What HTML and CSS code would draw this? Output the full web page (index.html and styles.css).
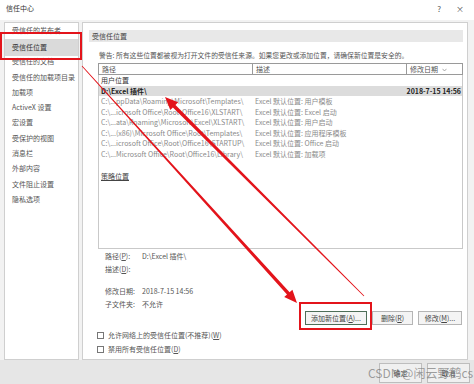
FILE: index.html
```html
<!DOCTYPE html>
<html lang="zh-CN">
<head>
<meta charset="utf-8">
<title>信任中心</title>
<link rel="stylesheet" href="styles.css">
</head>
<body>
<div class="window">
  <div class="titlebar">
    <span class="title">信任中心</span>
    <span class="tb-btns"><span class="tb-help">?</span><span class="tb-close">×</span></span>
  </div>
  <div class="main">
    <ul class="nav">
      <li>受信任的发布者</li>
      <li class="active">受信任位置</li>
      <li>受信任的文档</li>
      <li>受信任的加载项目录</li>
      <li>加载项</li>
      <li>ActiveX 设置</li>
      <li>宏设置</li>
      <li>受保护的视图</li>
      <li>消息栏</li>
      <li>外部内容</li>
      <li>文件阻止设置</li>
      <li>隐私选项</li>
    </ul>
    <section class="content">
      <div class="section-head">受信任位置</div>
      <p class="warning">警告: 所有这些位置都被视为打开文件的受信任来源。如果您更改或添加位置，请确保新位置是安全的。</p>
      <div class="list">
        <div class="list-head">
          <div class="col-path">路径</div>
          <div class="col-desc">描述</div>
          <div class="col-date">修改日期 <svg class="caret" width="5" height="4" viewBox="0 0 5 4"><path d="M0.5 0.8 L2.5 3 L4.5 0.8" fill="none" stroke="#8a8a8a" stroke-width="0.7"/></svg></div>
        </div>
        <div class="list-body">
          <div class="group">用户位置</div>
          <div class="row selected"><span class="c-path">D:\Excel 插件\</span><span class="c-desc"></span><span class="c-date">2018-7-15 14:56</span></div>
          <div class="row"><span class="c-path">C:\...ppData\Roaming\Microsoft\Templates\</span><span class="c-desc">Excel 默认位置: 用户模板</span><span class="c-date"></span></div>
          <div class="row"><span class="c-path">C:\...icrosoft Office\Root\Office16\XLSTART\</span><span class="c-desc">Excel 默认位置: Excel 启动</span><span class="c-date"></span></div>
          <div class="row"><span class="c-path">C:\...ata\Roaming\Microsoft\Excel\XLSTART\</span><span class="c-desc">Excel 默认位置: 用户启动</span><span class="c-date"></span></div>
          <div class="row"><span class="c-path">C:\...(x86)\Microsoft Office\Root\Templates\</span><span class="c-desc">Excel 默认位置: 应用程序模板</span><span class="c-date"></span></div>
          <div class="row"><span class="c-path">C:\...icrosoft Office\Root\Office16\STARTUP\</span><span class="c-desc">Excel 默认位置: Office 启动</span><span class="c-date"></span></div>
          <div class="row"><span class="c-path">C:\...Microsoft Office\Root\Office16\Library\</span><span class="c-desc">Excel 默认位置: 加载项</span><span class="c-date"></span></div>
          <div class="group policy">策略位置</div>
        </div>
      </div>
      <div class="details">
        <span class="lbl">路径(<u>P</u>):</span><span class="val">D:\Excel 插件\</span>
        <span class="lbl">描述(<u>D</u>):</span><span class="val"></span>
        <span class="lbl gap">修改日期:</span><span class="val gap">2018-7-15 14:56</span>
        <span class="lbl">子文件夹:</span><span class="val">不允许</span>
      </div>
      <div class="actions">
        <button class="btn btn-default">添加新位置(<u>A</u>)...</button>
        <button class="btn btn-del">删除(<u>R</u>)</button>
        <button class="btn btn-mod">修改(<u>M</u>)...</button>
      </div>
      <label class="check"><span class="box"></span><span class="check-text">允许网络上的受信任位置(不推荐)(<u>W</u>)</span></label>
      <label class="check"><span class="box"></span><span class="check-text">禁用所有受信任位置(<u>D</u>)</span></label>
    </section>
  </div>
  <div class="footer">
    <button class="btn btn-foot">确定</button>
    <button class="btn btn-foot">取消</button>
  </div>

  <div class="mark mark-nav"></div>
  <div class="mark mark-add"></div>
  <svg class="arrows" width="474" height="384" viewBox="0 0 474 384">
    <polygon fill="#e3141b" points="81.7,66.3 287.0,294.6 284.2,297.1 297,303 292.4,289.7 289.6,292.2 82.3,65.7"/>
    <polygon fill="#e3141b" points="364.3,295.7 175.5,104.9 178.1,102.3 165,97 170.3,110.1 172.9,107.5 363.7,296.3"/>
  </svg>
  <div class="watermark">CSDN @闲云野鹤cs</div>
</div>
</body>
</html>
```
FILE: styles.css
```css
* { box-sizing: border-box; }
html, body { margin: 0; padding: 0; }
body {
  width: 474px;
  height: 384px;
  overflow: hidden;
  font-family: "Noto Sans CJK SC", "Noto Sans", sans-serif;
  font-size: 7px;
  color: #4a4a4a;
  background: #fff;
}
.window {
  position: relative;
  width: 474px;
  height: 384px;
  display: flex;
  flex-direction: column;
  background: #f2f2f2;
}
.titlebar {
  height: 20px;
  background: #fff;
  display: flex;
  align-items: center;
  justify-content: space-between;
  padding: 0 10px 4px 6px;
  font-size: 7px;
  color: #333;
}
.tb-btns { display: flex; gap: 15px; font-size: 8px; color: #555; }
.main {
  display: flex;
  gap: 3px;
  padding: 2px 6px 0 4px;
  height: 340px;
}
.nav {
  list-style: none;
  margin: 0;
  padding: 0;
  width: 75px;
  background: #fff;
  border: 1px solid #cfcfcf;
}
.nav li {
  height: 15.3px;
  line-height: 15.3px;
  padding-left: 7px;
  color: #555;
  white-space: nowrap;
}
.nav li.active {
  background: #dadada;
  color: #333;
  height: 17px;
  line-height: 17px;
  margin: 0.5px 0 -1.5px;
}
.content {
  flex: 1;
  background: #fff;
  border: 1px solid #cfcfcf;
  padding: 7px 4px 0 6px;
  display: flex;
  flex-direction: column;
}
.section-head {
  height: 12px;
  line-height: 12px;
  background: #e8e8e8;
  padding-left: 3px;
  color: #444;
}
.warning {
  margin: 8px 0 0 10px;
  line-height: 10px;
  height: 10px;
  white-space: nowrap;
  color: #555;
  font-size: 6.8px;
}
.list {
  margin: 3px 0 0 9px;
  width: 365px;
}
.list-head {
  display: flex;
  height: 12px;
  line-height: 10px;
  border: 1px solid #9a9a9a;
}
.list-head > div { padding-left: 3px; color: #555; }
.col-path { width: 154px; border-right: 1px solid #9a9a9a; }
.col-desc { width: 154px; border-right: 1px solid #9a9a9a; }
.col-date { flex: 1; }
.caret { margin-left: 2px; vertical-align: 0; }
.list-body {
  height: 174px;
  border: 1px solid #c9c9c9;
  border-top: none;
}
.group {
  height: 10.5px;
  line-height: 10.5px;
  padding-left: 2px;
  color: #333;
}
.group.policy {
  margin-top: 12px;
  text-decoration: underline;
  color: #444;
}
.row {
  display: flex;
  height: 10.5px;
  line-height: 10.5px;
  color: #8a8a8a;
  white-space: nowrap;
}
.row.selected {
  background: #dcdcdc;
  color: #222;
  font-weight: bold;
}
.c-path { width: 154px; padding-left: 2px; overflow: hidden; }
.c-desc { width: 154px; padding-left: 2px; }
.c-date { flex: 1; text-align: right; padding-right: 1px; }
.details {
  display: grid;
  grid-template-columns: 37px auto;
  margin: 2px 0 0 16px;
  line-height: 10px;
  row-gap: 3px;
  color: #555;
}
.details .gap { margin-top: 9px; }
.actions {
  display: flex;
  justify-content: flex-end;
  gap: 5px;
  margin-top: 2px;
  padding-right: 1px;
}
.btn {
  font-family: inherit;
  font-size: 7px;
  color: #444;
  background: #f4f4f4;
  border: 1px solid #b5b5b5;
  height: 14px;
  padding: 0;
  line-height: 12px;
}
.btn-default { width: 62px; border-color: #4e6e58; }
.btn-del { width: 41px; }
.btn-mod { width: 44px; }
.check {
  display: flex;
  align-items: center;
  gap: 4px;
  margin-left: 8px;
  height: 14px;
  color: #555;
}
.actions + .check { margin-top: 3px; }
.box {
  width: 7px;
  height: 7px;
  border: 1px solid #777;
  background: #fff;
}
.footer {
  flex: 1;
  background: #e6e6e6;
  display: flex;
  justify-content: flex-end;
  align-items: flex-start;
  gap: 5px;
  padding: 3px 4px 0 0;
}
.btn-foot { width: 43px; height: 20px; background: #f0f0f0; border-color: #bdbdbd; }
.mark {
  position: absolute;
  border: 2.5px solid #e3141b;
}
.mark-nav { left: 0; top: 32px; width: 82px; height: 28px; }
.mark-add { left: 299px; top: 302px; width: 73px; height: 28px; }
.arrows { position: absolute; left: 0; top: 0; pointer-events: none; }
.watermark {
  position: absolute;
  left: 368px;
  top: 364px;
  font-size: 12px;
  color: rgba(120, 120, 120, 0.7);
  font-family: "Noto Sans CJK SC", "Noto Sans", sans-serif;
  white-space: nowrap;
}
```
